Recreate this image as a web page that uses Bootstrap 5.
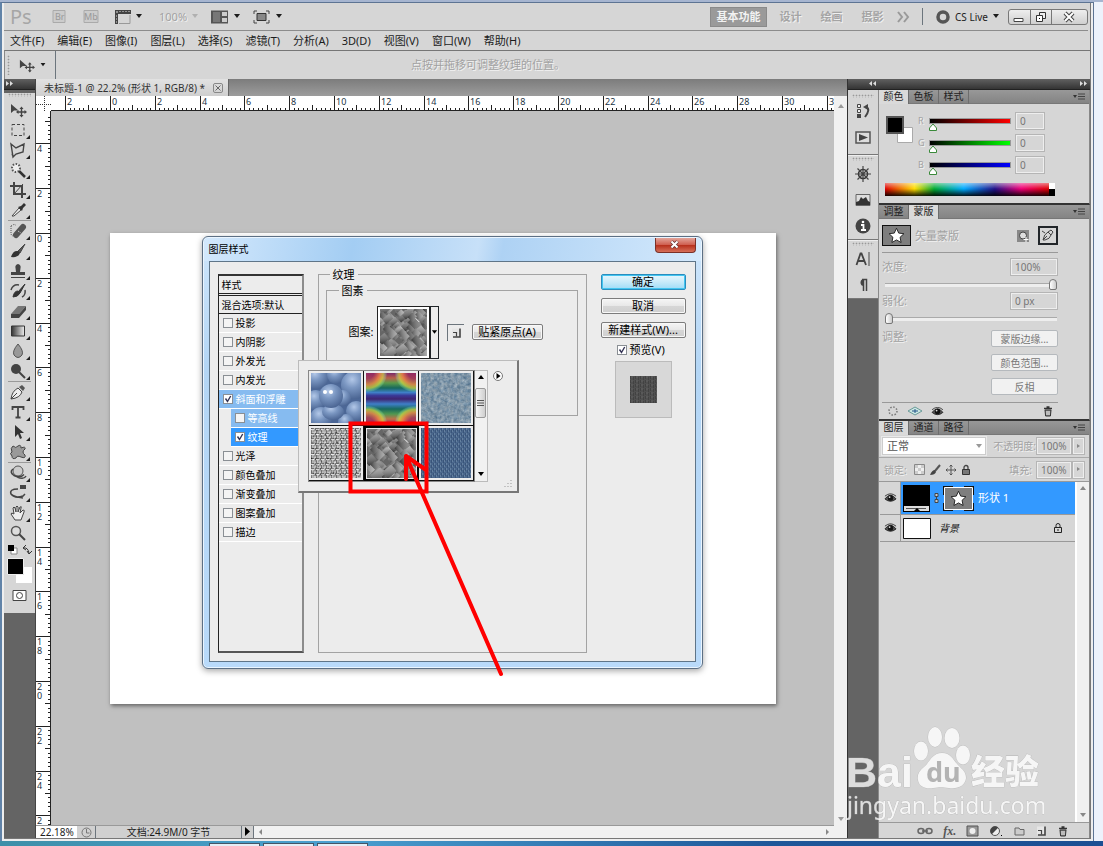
<!DOCTYPE html>
<html lang="zh-CN">
<head>
<meta charset="utf-8">
<meta name="viewport" content="width=device-width, initial-scale=1">
<title>未标题-1</title>
<link href="https://cdn.jsdelivr.net/npm/bootstrap@5.3.0/dist/css/bootstrap.min.css" rel="stylesheet">
<style>
body{background:#edf2fb;font:11px/14px "Noto Sans","Noto Sans CJK SC",sans-serif;color:#1c1c1c;overflow:hidden}
button,input,select{font:inherit;color:inherit}
button{border:0;background:none;padding:0}
svg{display:block;flex:none}
.strip{height:2px;background:#a6b5d0}
.taskbar{height:5px;background:linear-gradient(90deg,#3d8fa8,#4aa0d0 30%,#1e5799 70%,#1b4f93);padding-left:209px;gap:3px}
.taskbar i{width:51px;background:#e4eef6;border:1px solid #456;border-bottom:0;margin-top:2px}
.win{margin-right:9px;border:1px solid #5d7493;border-left:2px solid #6183a8;border-bottom:0;padding:0 2px 2px;background:#eee;min-height:0}
.win-in{background:#d6d6d6;border-bottom:1px solid #777;border-right:1px solid #777;min-height:0}
.appbar{height:28px;border-bottom:1px solid #8c8c8c;margin-right:2px;padding-left:6px}
.ps{font:20px/22px "Noto Sans";color:#a6a6a6;width:42px}
.appic{color:#b0b0b0}
.menus{height:19px;gap:13px;padding-left:6px}
.menus a{color:#1c1c1c;text-decoration:none;white-space:nowrap}
.opts{height:29px;border-top:1px solid #767676;border-left:1px solid #888;position:relative}
.emb{color:#a2a2a2;text-shadow:1px 1px 0 #f2f2f2}
.grip{background:radial-gradient(circle,#999 40%,transparent 50%) 0 0/3px 3px}
.ws{font-size:11px;font-weight:700;color:#a4a4a4;text-shadow:1px 1px 0 #f0f0f0;width:41px}
.ws.on{width:57px;height:20px;background:#9a9a9a;border:1px solid #8a8a8a;color:#f2f2f2;text-shadow:none;margin-right:3px}
.caps{border:1px solid #777;border-radius:3px;height:16px;background:linear-gradient(#eee,#cfcfcf)}
.caps button+button{border-left:1px solid #777}
.caps button{height:14px;width:21px}
.caps button:last-child{width:36px}
.head{height:11px;background:linear-gradient(#606060,#343434);border-bottom:1px solid #222}
.work{min-height:0}
.tools{width:32px;background:#646464;border-right:1px solid #444}
.toolbox{background:#d6d6d6;padding-bottom:8px}
.tool{width:32px;height:20px;padding-left:5px;position:relative;color:#444;display:block}
.tool.fly::after{content:"";position:absolute;right:6px;bottom:1px;border:2px solid #222;border-left-color:transparent;border-top-color:transparent}
.tsep{height:1px;background:#9a9a9a;margin:0 4px}
.tabs{height:17px;background:linear-gradient(#7c7c7c,#9c9c9c)}
.doctab{background:linear-gradient(#e2e2e2,#cfcfcf);padding:0 5px 0 8px;height:17px;border-right:1px solid #666;color:#333;gap:8px;white-space:nowrap;font-size:10px}
.closex{width:10px;height:10px;border:1px solid #888;border-radius:2px}
.rul{background:#fff;overflow:hidden}
.rul text{font:9px "Noto Sans";fill:#234}
.hr-r{height:15px}
.vr-r{width:15px;position:relative}
.vr-r svg,.hr-r svg{position:absolute;left:0;top:0}
.canvas{background:#c0c0c0;min-width:0}
.paper{width:666px;height:471px;background:#fff;box-shadow:1px 2px 4px #666;position:relative}
.status{height:13px;background:#d0d0d0;border-top:1px solid #999;font-size:10px;line-height:12px}
.sbar{width:13px;background:#f1f1f1}
.dock{width:243px;border-left:1px solid #333}
.rail{width:31px;background:#646464;border-right:1px solid #8a8a8a}
.railg{background:#d6d6d6;border-bottom:1px solid #777;color:#444;padding-top:4px}
.railg+.railg{border-top:1px solid #eee;padding-top:1px}
.railg button{display:block;width:30px;height:26px;padding-left:7px}
.ptabs{height:14px;background:linear-gradient(#989898,#848484);border-bottom:1px solid #777;font-size:10px;line-height:13px}
.ptabs button{width:30px;border-right:1px solid #6d6d6d;color:#222;height:14px}
.ptabs button.on{background:#dadada}
.panel{border-bottom:2px solid #333;border-right:1px solid #888;background:#d6d6d6}
.num{background:#d6d6d6;border:1px solid #b5b5b5;outline:1px solid #eee;outline-offset:-2px;color:#777;height:18px;padding:0 4px;font-size:10px;border-radius:0;min-width:0}
.rgb{-webkit-appearance:none;appearance:none;width:82px;height:16px;background:none;margin:0 0 0 -2px}
.rgb::-webkit-slider-runnable-track{height:6px;background:linear-gradient(90deg,#000,var(--c));border:1px solid #999}
.rgb::-webkit-slider-thumb{-webkit-appearance:none;width:8px;height:8px;margin:4px 0 0 -1px;border:0;background:url("data:image/svg+xml,%3Csvg xmlns='http://www.w3.org/2000/svg' viewBox='0 0 8 8'%3E%3Cpath d='M4 1L7.500 5v2.500h-7V5z' fill='%23fff' stroke='%233a8a3a'/%3E%3C/svg%3E")}
.spec{width:164px;height:13px;background:linear-gradient(rgba(255,255,255,.5),transparent 45%,rgba(0,0,0,.9)),linear-gradient(90deg,#d00,#fd0 18%,#0a3 30%,#0af 48%,#218 67%,#e07 83%,#d00)}
.bw{width:6px;background:linear-gradient(#fff 50%,#000 50%)}
.msl{-webkit-appearance:none;appearance:none;height:12px;background:none;margin:0}
.msl::-webkit-slider-runnable-track{height:4px;background:#eee;border-top:1px solid #aaa}
.msl::-webkit-slider-thumb{-webkit-appearance:none;width:8px;height:11px;margin-top:-5px;background:linear-gradient(90deg,#fff,#ccc);border:1px solid #777;border-radius:4px 4px 2px 2px}
.gb{width:67px;height:17px;background:#f1f1f1;border:1px solid #b5b9bd;border-radius:2px;color:#777;font-size:10px;line-height:14px}
.star{width:29px;height:21px;background:#7e7e7e;border:1px solid #111}
.lay{border-bottom:1px solid #999;margin-left:1px}
.eye{width:21px;border-right:1px solid #999}
.lay.on .lc{background:#39f;color:#fff}
.modes{width:104px;height:18px;border:1px solid #ccc;background:#fff;border-radius:0;appearance:none;padding:0 4px;outline:1px solid #e9e9e9;color:#555}
.dlg{left:92px;top:3px;width:501px;border:1px solid #5c6f84;border-radius:6px;background:linear-gradient(#cfe6fb,#b4d6f5 30%,#b9dafa);box-shadow:inset 0 0 0 1px #eaf5ff,0 2px 6px rgba(0,0,0,.35);padding:0 6px 6px;font-size:11px;color:#000;z-index:2}
.ttl{height:23px;font-size:10px;background:linear-gradient(100deg,#d3e8fc,#a3cdf3 30%,#c7e0f8 55%,#aed2f4 60%,#d4e9fc);margin:1px -5px 0;padding-left:5px;border-radius:5px 5px 0 0}
.xbtn{width:41px;height:15px;background:linear-gradient(#e3a59a,#cf5f50 48%,#b7301c 52%,#d6705a);border:1px solid #7b3128;border-top:0;border-radius:0 0 4px 4px;margin-right:5px}
.dbody{background:#ececec;border:1px solid #5f7588;height:401px;padding:12px 9px 8px 8px;gap:14px}
.slist{width:86px;height:379px;border:2px solid #8c8c8c;border-left:1px solid #222;border-top:2px solid #333;border-bottom-color:#555;font-size:10px}
.slist .h1x{height:17px;padding-left:3px;line-height:18px}
.slist .h2x{height:21px;border-top:3px double #222;border-bottom:1px solid #222;padding-left:3px;line-height:18px;white-space:nowrap}
.srow{height:19px;border-bottom:1px solid #fff;gap:3px;padding-left:4px;white-space:nowrap}
.srow.sub{margin-left:12px}
.srow.a{background:#86bbf0;color:#fff}
.srow.b{background:#39f;color:#fff}
.ck{appearance:none;width:10px;height:10px;border:1px solid #8a8f94;background:#f4f4f4;margin:0;flex:none;outline:0}
.ck:checked{background:#fff url("data:image/svg+xml,%3Csvg xmlns='http://www.w3.org/2000/svg' viewBox='0 0 8 8'%3E%3Cpath d='M1.5 3.5l2 3L6.7 1' fill='none' stroke='%23335' stroke-width='1.4'/%3E%3C/svg%3E")}
fieldset.gp{border:1px solid #a3a3a3;min-width:0}
fieldset.gp legend{float:none;width:auto;margin:0 0 0 4px;padding:0 3px;font-size:11px;line-height:14px}
fieldset.inner-gp legend{margin-left:-10px}
.outer-gp{width:269px;height:385px;margin-top:-6px!important;padding:2px 8px 0 7px!important}
.inner-gp{height:132px;padding:8px 0 0 22px!important}
.btnw{border:1px solid #7c7c7c;border-radius:2px;background:linear-gradient(#f5f5f5,#e8e8e8 48%,#d6d6d6 52%,#cfcfcf);height:16px;line-height:14px;white-space:nowrap;box-shadow:inset 0 0 0 1px #f8f8f8}
.btnw.ok{border-color:#2a8dbe;background:linear-gradient(#e6f6fd,#c9ebfa 48%,#9fdcf7);box-shadow:inset 0 0 0 1px #43c5f0}
.thumb{width:53px;height:53px;border:1px solid #222;background:#fff;padding:2px}
.pop{left:95px;top:123px;width:221px;height:133px;background:#ececec;border:1px solid #bbb;border-right:2px solid #777;border-bottom:2px solid #777;padding:9px}
.grid3{display:grid;grid-template-columns:repeat(3,55px);grid-auto-rows:55px;border:1px solid #888;width:167px;height:112px}
.grid3 button{border-right:1px solid #111;border-bottom:1px solid #111;background:#ececec;padding:2px}
.grid3 .sel{border:2px solid #000;padding:1px}
.pbar{width:13px;background:#f1f1f1;border:1px solid #bbb;border-left:0;height:112px}
.pth{width:11px;height:30px;border:1px solid #999;border-radius:2px;background:linear-gradient(90deg,#f6f6f6,#cfcfcf)}
.note{left:0;top:0;pointer-events:none}
.lfoot{height:16px;border-top:1px solid #999;padding:0 20px 0 38px}
.wm{right:46px;bottom:18px;pointer-events:none;z-index:3}
</style>
</head>
<body class="vh-100 d-flex flex-column">
<svg width="0" height="0" class="position-absolute" aria-hidden="true">
<defs>
<linearGradient id="gr" x1="0" x2="1"><stop stop-color="#333"/><stop offset="1" stop-color="#eee"/></linearGradient>
<linearGradient id="mt" x1="0" y1="1" x2="1" y2="0"><stop stop-color="#000" stop-opacity=".5"/><stop offset="1" stop-color="#fff" stop-opacity=".25"/></linearGradient>
<radialGradient id="bb" cx=".4" cy=".3" r=".75"><stop stop-color="#b3c8e8"/><stop offset=".4" stop-color="#7b97c2"/><stop offset="1" stop-color="#46608e"/></radialGradient>
<linearGradient id="rb" x2="0" y2="1"><stop stop-color="#7a2a6a"/><stop offset=".1" stop-color="#b8604a"/><stop offset=".2" stop-color="#5a9a4a"/><stop offset=".3" stop-color="#17695c"/><stop offset=".39" stop-color="#3f7fc8"/><stop offset=".45" stop-color="#3a3a98"/><stop offset=".52" stop-color="#3f2470"/><stop offset=".62" stop-color="#3f7fc8"/><stop offset=".72" stop-color="#17695c"/><stop offset=".82" stop-color="#4f9850"/><stop offset=".92" stop-color="#c0704a"/><stop offset="1" stop-color="#a03050"/></linearGradient>
<radialGradient id="yl"><stop offset=".3" stop-color="#9a2a60" stop-opacity=".7"/><stop offset=".6" stop-color="#f08048" stop-opacity=".8"/><stop offset=".8" stop-color="#d8d840" stop-opacity=".7"/><stop offset="1" stop-color="#8fc" stop-opacity=".1"/></radialGradient>
<filter id="nz" x="0" y="0" width="1" height="1" color-interpolation-filters="sRGB"><feTurbulence type="fractalNoise" baseFrequency=".3" numOctaves="3" seed="4"/><feColorMatrix values=".4 .2 0 0 .2  .3 .2 0 0 .34  .2 .2 0 0 .46  0 0 0 0 1"/></filter>
<filter id="ng" x="0" y="0" width="1" height="1"><feTurbulence type="fractalNoise" baseFrequency=".5" numOctaves="2" seed="9"/><feColorMatrix values="1.6 0 0 0 -.3  1.6 0 0 0 -.3  1.6 0 0 0 -.3  0 0 0 0 .45"/></filter>
<pattern id="wv" width="5" height="5" patternUnits="userSpaceOnUse"><path fill="#aaa" d="M0 0h5v5H0z"/><path d="M0 .5h3M2.500 3h3M.5 2v3M4.500 0v2" stroke="#333"/><path d="M0 1.500h3M3 4h2" stroke="#eee"/></pattern>
<pattern id="dn" width="4" height="5" patternUnits="userSpaceOnUse"><path fill="#4a678c" d="M0 0h4v5H0z"/><path d="M.5 0v3M2.500 2v3" stroke="#3a557a"/><path d="M1.500 0v2M3.500 2v2" stroke="#64809f"/></pattern>
<pattern id="dk" width="5" height="4" patternUnits="userSpaceOnUse"><path fill="#505050" d="M0 0h5v4H0z"/><path d="M.5 0v3M3.500 1v3" stroke="#424242"/><path d="M2 0v2" stroke="#626262"/></pattern>
<symbol id="metal" viewBox="0 0 50 50"><path fill="#666" d="M0 0h50v50H0z"/><g id="metalg"></g></symbol>
<symbol id="st" viewBox="0 0 20 20"><path d="M10 1.500l2.600 5.700 6.100.7-4.500 4.200 1.200 6.100L10 15.200l-5.400 3 1.200-6.100L1.300 7.900l6.100-.7z" fill="#fff" stroke="#111"/></symbol>
<symbol id="mv" viewBox="0 0 18 18"><path d="M2 3v9l3-2.500h4.500z" fill="#444"/><path d="M12.500 7v8M8.500 11h8" stroke="#444" stroke-width="1.400"/><path d="M12.500 5.500l2 2.500h-4zM12.500 16.500l2-2.500h-4zM7 11l2.500-2v4zM18 11l-2.500-2v4z" fill="#444"/></symbol>
<symbol id="eye" viewBox="0 0 14 10"><path d="M1 6Q7-2 13 6Q7 11 1 6z" fill="#555" stroke="#222"/><circle cx="7" cy="5" r="3" fill="#111"/><circle cx="6" cy="4" r="1" fill="#ddd"/><path d="M1 3Q7-2 13 3" fill="none" stroke="#333"/></symbol>
<symbol id="trash" viewBox="0 0 12 12"><path d="M2 3.500h8M4.500 2h3" stroke="#333" stroke-width="1.500"/><path d="M3 5h6l-.6 6H3.600z" fill="#888" stroke="#333"/><path d="M5 6v4M7 6v4" stroke="#eee"/></symbol>
<symbol id="newp" viewBox="0 0 12 12"><path d="M2 1.500h8v8H2z" fill="#e6e6e6"/><path d="M10 1.500V10H3" fill="none" stroke="#444" stroke-width="1.600"/><path d="M3 5.500h3.500V9.500" fill="none" stroke="#444" stroke-width="1.200"/></symbol>
<symbol id="dn3" viewBox="0 0 8 5"><path d="M1 0h6L4 4z" fill="currentColor"/></symbol>
<symbol id="up3" viewBox="0 0 8 5"><path d="M1 4h6L4 0z" fill="currentColor"/></symbol>
<symbol id="pm" viewBox="0 0 12 8"><path d="M0 2h4L2 5z" fill="#333"/><path d="M5 1h7M5 3.500h7M5 6h7" stroke="#444"/></symbol>
<symbol id="lock" viewBox="0 0 10 12"><path d="M3 5V3.500a2 2 0 014 0V5" fill="none" stroke="#444" stroke-width="1.300"/><path d="M1.500 5.500h7v5h-7z" fill="#777" stroke="#333"/></symbol>
</defs></svg>
<div class="strip"></div>
<div class="win flex-grow-1 d-flex flex-column">
<div class="win-in flex-grow-1 d-flex flex-column position-relative">
<header class="appbar d-flex align-items-center">
  <div class="ps">Ps</div>
  <svg class="me-3" width="15" height="13"><path d="M1 .5h12v12H1z" fill="#ccc" stroke="#aaa"/><text x="3" y="10" font-size="9" fill="#999">Br</text></svg>
  <svg class="me-3" width="16" height="13"><path d="M1 .5h14v12H1z" fill="#ccc" stroke="#aaa"/><text x="1" y="10" font-size="9" fill="#999">Mb</text></svg>
  <button class="d-flex align-items-center gap-1" aria-label="查看额外内容"><svg width="16" height="14"><path d="M0 0h16v4H0zM0 4h3v10H0z" fill="#444"/><path d="M2 1v2M5 1v1M8 1v1M11 1v1M14 1v1M1 6h1M1 9h1M1 12h1" stroke="#ddd"/><path d="M4 13.500h11V5" fill="none" stroke="#999"/></svg><svg width="8" height="5"><use href="#dn3"/></svg></button>
  <span class="emb ms-3">100%</span><svg class="appic ms-1" width="8" height="5"><use href="#dn3"/></svg>
  <button class="d-flex align-items-center gap-1 ms-2 ps-1" aria-label="排列文档"><svg width="18" height="14"><path d="M0 .5h17v13H0z" fill="#555"/><path d="M2 2h7v10H2z" fill="#777"/><path d="M11 2h5v4h-5zM11 8h5v4h-5z" fill="#ccc"/></svg><svg width="8" height="5"><use href="#dn3"/></svg></button>
  <button class="d-flex align-items-center gap-1 ms-2 ps-1" aria-label="屏幕模式"><svg width="18" height="14"><path d="M4 3.500h9v7H4z" fill="#888" stroke="#333"/><path d="M1 4V1h3M13 1h3v3M16 10v3h-3M4 13H1v-3" fill="none" stroke="#444"/></svg><svg width="8" height="5"><use href="#dn3"/></svg></button>
  <div class="ms-auto d-flex align-items-center">
    <button class="ws on">基本功能</button><button class="ws">设计</button><button class="ws">绘画</button><button class="ws">摄影</button>
    <button aria-label="更多" style="margin:0 12px 0 3px"><svg width="14" height="12"><path d="M2 1l4 5-4 5M8 1l4 5-4 5" fill="none" stroke="#999" stroke-width="2"/></svg></button>
    <span class="border-start border-secondary" style="height:17px"></span>
    <button class="d-flex align-items-center ms-2 me-2 text-nowrap" style="font-size:10px"><svg class="mx-1" width="16" height="16"><circle cx="8" cy="8" r="5" fill="none" stroke="#555" stroke-width="3.500"/></svg>CS Live<svg class="ms-1" width="8" height="5"><use href="#dn3"/></svg></button>
    <div class="caps d-flex"><button aria-label="最小化"><svg width="20" height="12"><path d="M5 7.500h9v3H5z" fill="#fff" stroke="#444"/></svg></button><button aria-label="还原"><svg width="20" height="12"><path d="M8.500 1.500h6v6h-6z" fill="#eee" stroke="#333"/><path d="M5.500 4.500h6v6h-6z" fill="#fff" stroke="#333"/><path d="M8 7h1v1H8z"/></svg></button><button aria-label="关闭"><svg width="34" height="12"><path d="M13 2l8 8M21 2l-8 8" stroke="#444" stroke-width="4"/><path d="M13 2l8 8M21 2l-8 8" stroke="#fff" stroke-width="2"/></svg></button></div>
  </div>
</header>
<nav class="menus d-flex align-items-center">
<a href="#">文件(F)</a><a href="#">编辑(E)</a><a href="#">图像(I)</a><a href="#">图层(L)</a><a href="#">选择(S)</a><a href="#">滤镜(T)</a><a href="#">分析(A)</a><a href="#">3D(D)</a><a href="#">视图(V)</a><a href="#">窗口(W)</a><a href="#">帮助(H)</a>
</nav>
<div class="opts d-flex align-items-center">
  <span class="grip" style="width:3px;height:20px;margin-left:2px"></span>
  <button class="d-flex align-items-center ms-2 gap-1" aria-label="移动工具"><svg width="17" height="17"><use href="#mv"/></svg><svg width="8" height="4"><use href="#dn3"/></svg></button>
  <span class="border-start border-secondary ms-2 align-self-stretch"></span>
  <span class="emb flex-grow-1 text-center" style="padding-right:170px">点按并拖移可调整纹理的位置。</span>
</div>
<div class="work flex-grow-1 d-flex">
  <aside class="tools flex-shrink-0">
    <div class="head"><svg width="14" height="9"><path d="M2 2v5l3-2.500zM6 2v5l3-2.500z" fill="#ddd"/></svg></div>
    <div class="toolbox" id="toolbox">
      <div class="grip mx-1" style="height:4px;margin-top:3px;margin-bottom:3px"></div>
    </div>
  </aside>
  <main class="flex-grow-1 d-flex flex-column" style="min-width:0">
    <div class="tabs"><div class="doctab d-inline-flex align-items-center">未标题-1 @ 22.2% (形状 1, RGB/8) *<button class="closex" aria-label="关闭"><svg width="8" height="8"><path d="M1.500 1.500l5 5M6.500 1.500l-5 5" stroke="#666"/></svg></button></div></div>
    <div class="flex-grow-1 d-flex" style="min-height:0">
      <div class="flex-grow-1 d-flex flex-column" style="min-width:0">
        <div class="rul hr-r position-relative"><svg id="hr" width="100%" height="15"></svg></div>
        <div class="flex-grow-1 d-flex" style="min-height:0">
          <div class="rul vr-r flex-shrink-0"><svg id="vr" width="15" height="100%"></svg></div>
          <div class="canvas flex-grow-1 d-flex align-items-center justify-content-center">
            <div class="paper flex-shrink-0">
              <section class="dlg position-absolute" aria-label="图层样式">
                <div class="ttl d-flex justify-content-between"><span class="pt-1">图层样式</span><button class="xbtn d-flex justify-content-center align-items-center" aria-label="关闭"><svg width="12" height="9"><path d="M2.500 1.500l6 6M8.500 1.500l-6 6" stroke="#633" stroke-width="3.500"/><path d="M2.500 1.500l6 6M8.500 1.500l-6 6" stroke="#fff" stroke-width="2"/></svg></button></div>
                <div class="dbody d-flex">
                  <div class="slist flex-shrink-0" id="slist"><div class="h1x">样式</div><div class="h2x">混合选项:默认</div></div>
                  <fieldset class="gp outer-gp flex-shrink-0"><legend>纹理</legend>
                    <fieldset class="gp inner-gp"><legend>图素</legend>
                      <div class="d-flex align-items-center">
                        <span style="width:28px">图案:</span>
                        <button class="thumb" aria-label="图案"><svg width="47" height="47"><use href="#metal"/></svg></button>
                        <button class="d-flex align-items-center border border-dark" style="width:9px;height:53px" aria-label="打开图案拾色器"><svg width="7" height="5"><use href="#dn3"/></svg></button>
                        <button class="ms-2 me-2 border-top border-start border-secondary" style="padding:2px" aria-label="新建预设"><svg width="12" height="12"><use href="#newp"/></svg></button>
                        <button class="btnw" style="width:71px">贴紧原点(A)</button>
                      </div>
                    </fieldset>
                  </fieldset>
                  <div class="flex-grow-1 d-flex flex-column" style="gap:8px">
                    <button class="btnw ok">确定</button><button class="btnw">取消</button><button class="btnw">新建样式(W)...</button>
                    <div style="margin:-3px 0 0 16px"><label class="d-flex align-items-center" style="gap:3px"><input type="checkbox" class="ck" checked>预览(V)</label>
                      <div class="d-flex align-items-center justify-content-center" style="width:57px;height:57px;margin:4px 0 0 -2px;background:#d8d8d8;border:1px solid #bbb"><svg width="27" height="27"><path d="M0 0h27v27H0z" fill="url(#dk)"/></svg></div></div>
                  </div>
                </div>
                <div class="pop position-absolute d-flex">
                  <div class="grid3">
                    <button aria-label="气泡"><svg width="50" height="50"><path d="M0 0h50v50H0z" fill="#4c6796"/><g fill="url(#bb)"><circle cx="6" cy="5" r="11"/><circle cx="25" cy="2" r="9"/><circle cx="44" cy="12" r="14"/><circle cx="5" cy="27" r="10"/><circle cx="10" cy="45" r="11"/><circle cx="45" cy="38" r="10"/><circle cx="35" cy="49" r="8"/><ellipse cx="22" cy="39" rx="11" ry="8"/><circle cx="32" cy="25" r="8"/><circle cx="20" cy="23" r="12"/></g><circle cx="14" cy="19" r="2" fill="#fff"/><circle cx="20" cy="19" r="2" fill="#fff"/></svg></button>
                    <button aria-label="彩虹"><svg width="50" height="50"><path d="M0 0h50v50H0z" fill="url(#rb)"/><g fill="url(#yl)"><ellipse cx="2" cy="0" rx="19" ry="19"/><ellipse cx="48" cy="0" rx="19" ry="19"/><ellipse cx="2" cy="50" rx="19" ry="17"/><ellipse cx="48" cy="50" rx="19" ry="17"/></g></svg></button>
                    <button aria-label="蓝色纸纹"><svg width="50" height="50"><path d="M0 0h50v50H0z" filter="url(#nz)"/></svg></button>
                    <button aria-label="编织"><svg width="50" height="50"><path d="M0 0h50v50H0z" fill="url(#wv)"/><path d="M0 0h50v50H0z" filter="url(#ng)"/></svg></button>
                    <button class="sel" aria-label="金属"><svg width="49" height="49"><use href="#metal"/></svg></button>
                    <button aria-label="牛仔布"><svg width="50" height="50"><path d="M0 0h50v50H0z" fill="url(#dn)"/></svg></button>
                  </div>
                  <div class="pbar d-flex flex-column align-items-center"><svg class="my-1" width="8" height="5"><use href="#up3"/></svg><div class="pth mt-1 d-flex align-items-center justify-content-center"><svg width="7" height="8"><path d="M0 1.500h7M0 4h7M0 6.500h7" stroke="#555"/></svg></div><svg class="mt-auto mb-1" width="8" height="5"><use href="#dn3"/></svg></div>
                  <div class="d-flex flex-column justify-content-between align-items-end flex-grow-1"><button class="me-1" aria-label="菜单"><svg width="12" height="12"><circle cx="6" cy="6" r="4.500" fill="#fff" stroke="#777"/><path d="M4.500 3v6l4-3z"/></svg></button><svg style="margin:0 -5px -6px 0" width="9" height="9"><path d="M7 1v1M7 4v1M7 7v1M4 4v1M4 7v1M1 7v1" stroke="#999"/></svg></div>
                </div>
                <svg class="note position-absolute" width="320" height="445"><path d="M147.500 186.500h76v68h-76z" fill="none" stroke="red" stroke-width="4"/><path d="M203 219L298 437M203 242V219L223 233" fill="none" stroke="red" stroke-width="4" stroke-linecap="round" stroke-linejoin="round"/></svg>
              </section>
            </div>
          </div>
        </div>
        <div class="status d-flex flex-shrink-0">
          <span class="bg-white px-1 text-end" style="width:41px">22.18%</span>
          <span class="border-end border-secondary d-flex align-items-center justify-content-center" style="width:19px"><svg width="11" height="11"><circle cx="5.500" cy="5.500" r="4.500" fill="none" stroke="#777"/><path d="M5.500 2v4h3" fill="none" stroke="#777"/></svg></span>
          <span class="border-end border-secondary text-center" style="width:146px">文档:24.9M/0 字节</span>
          <button class="border-end border-secondary" style="width:12px" aria-label="状态菜单"><svg width="11" height="12"><path d="M3 1v9l5-4.500z"/></svg></button>
          <div class="flex-grow-1 d-flex justify-content-between px-1" style="background:#f1f1f1"><svg width="6" height="12"><path d="M4 3v6L1 6z" fill="#888"/></svg><svg width="6" height="12"><path d="M2 3v6l3-3z" fill="#888"/></svg></div>
        </div>
      </div>
      <div class="sbar d-flex flex-column justify-content-between align-items-center pt-2 pb-3" style="color:#999"><svg width="8" height="5"><use href="#up3"/></svg><svg width="8" height="5"><use href="#dn3"/></svg></div>
    </div>
  </main>
  <aside class="dock flex-shrink-0 d-flex flex-column">
    <div class="head d-flex justify-content-between"><svg width="30" height="9"><path d="M24 2v5l-3-2.500zM28 2v5l-3-2.500z" fill="#ddd"/></svg><svg width="12" height="9"><path d="M2 2v5l3-2.500zM6 2v5l3-2.500z" fill="#ddd"/></svg></div>
    <div class="flex-grow-1 d-flex" style="min-height:0">
      <div class="rail flex-shrink-0">
        <div class="railg pb-1"><div class="grip mx-1" style="height:4px"></div>
          <button aria-label="历史记录"><svg width="16" height="16"><path d="M2.500 1.500h3v3h-3zM2.500 6.500h3v3h-3z" fill="#eee" stroke="#444"/><path d="M2 11h4v4H2z" fill="#444"/><path d="M10 14q6-8 1-10" fill="none" stroke="#444" stroke-width="2"/><path d="M8 4l5-3v6z" fill="#444"/></svg></button>
          <button aria-label="动作"><svg width="16" height="16"><path d="M1 3h14v11H1z" fill="#ddd" stroke="#555" stroke-width="1.500"/><path d="M4 5v7l9-3.500z" fill="#444"/></svg></button></div>
        <div class="railg"><div class="grip mx-1" style="height:4px"></div>
          <button aria-label="导航器"><svg width="16" height="16"><circle cx="8" cy="8" r="4.500" fill="none" stroke="#333" stroke-width="1.500"/><path d="M8 0v16M0 8h16M2.500 2.500l11 11M13.500 2.500l-11 11" stroke="#444" stroke-width="1.200"/></svg></button>
          <button aria-label="直方图"><svg width="16" height="16"><path d="M1 2.500h14v11H1z" fill="#ddd" stroke="#666"/><path d="M1 13v-3l3-1 2-4 2 2 3-2 2 4 2 1v3z" fill="#333"/></svg></button>
          <button aria-label="信息"><svg width="16" height="16"><circle cx="8" cy="8" r="7.500" fill="#444"/><circle cx="8" cy="4" r="1.300" fill="#fff"/><path d="M6 7h2.500v5M6 12h5" stroke="#fff" stroke-width="1.800" fill="none"/></svg></button></div>
        <div class="railg"><div class="grip mx-1" style="height:4px"></div>
          <button aria-label="字符"><svg width="16" height="16"><path d="M1.500 14L5.500 2.500h1L11 14M3 10h6" fill="none" stroke="#444" stroke-width="1.800"/><path d="M14 1v14" stroke="#444"/></svg></button>
          <button aria-label="段落"><svg width="16" height="16"><path d="M11.500 14V2.500H7M8.500 14V2" stroke="#444" stroke-width="1.500" fill="none"/><path d="M9 2a3.500 3.500 0 000 7z" fill="#444"/></svg></button></div>
      </div>
      <div class="flex-grow-1 d-flex flex-column" style="min-width:0">
        <section class="panel"><div class="ptabs d-flex align-items-center"><button class="on">颜色</button><button>色板</button><button>样式</button><svg class="ms-auto me-1" width="12" height="8"><use href="#pm"/></svg></div>
          <div class="d-flex px-1" style="padding-top:8px">
            <svg class="mt-1" style="margin-left:3px" width="28" height="28"><path d="M11.500 11.500h15v15h-15z" fill="#fff" stroke="#aaa"/><path d="M1 1h16v16H1z" stroke="#555" stroke-width="2"/></svg>
            <div class="d-flex flex-column ms-1" style="gap:4px">
              <label class="d-flex align-items-center"><span class="emb" style="width:13px;font-size:9px">R</span><input type="range" class="rgb" style="--c:#f00" value="0"><input class="num ms-1" style="width:30px" value="0" aria-label="R 值"></label>
              <label class="d-flex align-items-center"><span class="emb" style="width:13px;font-size:9px">G</span><input type="range" class="rgb" style="--c:#0f0" value="0"><input class="num ms-1" style="width:30px" value="0" aria-label="G 值"></label>
              <label class="d-flex align-items-center"><span class="emb" style="width:13px;font-size:9px">B</span><input type="range" class="rgb" style="--c:#00f" value="0"><input class="num ms-1" style="width:30px" value="0" aria-label="B 值"></label>
            </div></div>
          <div class="d-flex" style="margin:9px 0 7px 6px"><div class="spec"></div><div class="bw"></div></div>
        </section>
        <section class="panel"><div class="ptabs d-flex align-items-center"><button>调整</button><button class="on">蒙版</button><svg class="ms-auto me-1" width="12" height="8"><use href="#pm"/></svg></div>
          <div style="margin:0 31px 0 3px">
            <div class="d-flex align-items-center" style="height:34px;border-bottom:1px solid #999"><div class="star d-flex justify-content-center align-items-center"><svg width="17" height="17"><use href="#st"/></svg></div><span class="emb ms-1 me-auto">矢量蒙版</span><svg class="me-1" width="14" height="14"><path d="M1 1h12v12H1z" fill="#888"/><circle cx="7" cy="6.500" r="3.500" fill="#ddd" stroke="#444"/><path d="M10 8v5M7.500 10.500h5" stroke="#fff"/></svg><button class="ms-1 border border-2 border-dark" aria-label="矢量蒙版"><svg width="16" height="15"><path d="M3 12q1-6 5-8l3 3q-1 4-6 5zM8 4l3-2 2 2-2 3M3 12l4-4M2 3l3 2" fill="none" stroke="#444"/></svg></button></div>
            <label class="d-flex align-items-center justify-content-between" style="margin-top:5px"><span class="emb">浓度:</span><input class="num" style="width:48px" value="100%"></label>
            <input type="range" class="msl d-block" style="width:172px;margin:3px 0 1px 3px" value="100" aria-label="浓度">
            <label class="d-flex align-items-center justify-content-between"><span class="emb">弱化:</span><input class="num" style="width:48px" value="0 px"></label>
            <input type="range" class="msl d-block" style="width:172px;margin:3px 0 5px 3px" value="0" aria-label="羽化">
            <div class="d-flex justify-content-between" style="margin-bottom:7px"><span class="emb">调整:</span><div class="d-flex flex-column" style="gap:7px"><button class="gb">蒙版边缘...</button><button class="gb">颜色范围...</button><button class="gb">反相</button></div></div>
            <div class="d-flex align-items-center gap-2 px-1" style="height:17px;border-top:1px solid #999"><svg width="13" height="12"><circle cx="7" cy="6" r="4" fill="none" stroke="#777" stroke-width="1.500" stroke-dasharray="1.500 1.600"/></svg><svg width="16" height="10"><path d="M1 5l7-4 7 4-7 4z" fill="#cde8e4" stroke="#6a9a98"/><path d="M5 5h6M8 3v4" stroke="#258"/></svg><svg width="13" height="9"><use href="#eye"/></svg><svg class="ms-auto" width="12" height="12"><use href="#trash"/></svg></div>
          </div>
        </section>
        <section class="panel flex-grow-1 d-flex flex-column border-bottom-0"><div class="ptabs d-flex align-items-center"><button class="on">图层</button><button>通道</button><button>路径</button><svg class="ms-auto me-1" width="12" height="8"><use href="#pm"/></svg></div>
          <div class="d-flex align-items-center" style="height:23px;padding:0 4px 0 3px;border-bottom:1px solid #aaa"><div class="position-relative"><select class="modes" aria-label="混合模式"><option>正常</option></select><svg class="position-absolute" style="right:3px;top:7px;color:#999" width="8" height="5"><use href="#dn3"/></svg></div><label class="d-flex align-items-center ms-auto text-nowrap" style="font-size:10px"><span class="emb">不透明度:</span><input class="num" style="width:36px" value="100%"></label><button class="num px-1" style="width:13px" aria-label="不透明度滑块"><svg width="4" height="7"><path d="M0 1v4l3-2z" fill="#888"/></svg></button></div>
          <div class="d-flex align-items-center" style="height:24px;padding:0 4px 0 5px;border-bottom:1px solid #999;font-size:10px"><span class="emb" style="width:30px">锁定:</span><svg width="11" height="11"><path d="M.5.500h10v10H.5z" fill="#eee" stroke="#888"/><path d="M1 1h3v3H1zM7 1h3v3H7zM4 4h3v3H4zM1 7h3v3H1zM7 7h3v3H7z" fill="#ccc"/></svg><svg class="ms-1" width="12" height="12"><path d="M11 1L6 7" stroke="#555" stroke-width="2"/><path d="M6 6q-3 0-5 5 5 0 6-3z" fill="#444"/></svg><svg class="ms-1" width="12" height="12"><path d="M6 1v10M1 6h10M4.500 2.500L6 1l1.500 1.500M4.500 9.500L6 11l1.500-1.500M2.500 4.500L1 6l1.500 1.500M9.500 4.500L11 6l-1.500 1.500" stroke="#555" fill="none"/></svg><svg class="ms-1" width="10" height="12"><use href="#lock"/></svg><label class="d-flex align-items-center ms-auto"><span class="emb">填充:</span><input class="num ms-1" style="width:36px" value="100%"></label><button class="num px-1" style="width:13px" aria-label="填充滑块"><svg width="4" height="7"><path d="M0 1v4l3-2z" fill="#888"/></svg></button></div>
          <div class="flex-grow-1 d-flex"><div class="flex-grow-1">
            <div class="lay on d-flex" style="height:33px"><div class="eye d-flex align-items-center justify-content-center"><svg width="13" height="10"><use href="#eye"/></svg></div><div class="lc flex-grow-1 d-flex align-items-center"><svg style="margin-left:2px" width="27" height="27"><path d="M0 0h27v27H0z"/><path d="M1 21h25v5H1z" fill="#ddd"/><path d="M3 23.500h20" stroke="#555"/><path d="M11 26l3-3 3 3z"/></svg><svg class="mx-1" width="5" height="12"><path d="M1 1.500h3v3H1zM1 7.500h3v3H1zM2.500 4v4" fill="#ccc" stroke="#444"/></svg><svg width="31" height="25"><path d="M0 0h31v25H0z" fill="#111"/><path d="M10 .5h11M10 24.500h11M.5 9v8M30.500 9v8" stroke="#39f"/><path d="M1.500 1.500h28v22h-28z" fill="#7e7e7e" stroke="#fff"/><use href="#st" x="7" y="4" width="17" height="17"/></svg><span class="ms-1">形状 1</span></div></div>
            <div class="lay d-flex" style="height:27px"><div class="eye d-flex align-items-center justify-content-center"><svg width="13" height="10"><use href="#eye"/></svg></div><div class="lc flex-grow-1 d-flex align-items-center pe-2"><svg style="margin-left:2px" width="28" height="21"><path d="M.5.500h27v20H.5z" fill="#fff" stroke="#111"/></svg><span class="ms-2 me-auto fst-italic" style="font-size:10px">背景</span><svg class="me-1" width="10" height="12"><path d="M3 5V3.500a2 2 0 014 0V5M1.500 5.500h7v5h-7zM5 7v2" fill="none" stroke="#222"/></svg></div></div>
          </div><div class="d-flex flex-column justify-content-between align-items-center py-1" style="width:14px;background:#f0f0f0;border-left:2px solid #fff;color:#888"><svg width="8" height="5"><use href="#up3"/></svg><svg width="8" height="5"><use href="#dn3"/></svg></div></div>
          <div class="lfoot d-flex align-items-center justify-content-between"><svg width="16" height="8"><path d="M1 4q0-2.500 3-2.500t3 2.500-3 2.500T1 4zM9 4q0-2.500 3-2.500t3 2.500-3 2.500T9 4zM5 4h6" fill="none" stroke="#666" stroke-width="1.500"/></svg><span class="fst-italic fw-bold" style="font-family:'Liberation Serif',serif;color:#555;font-size:12px">fx.</span><svg width="13" height="12"><path d="M1 1h11v10H1z" fill="#999" stroke="#555"/><circle cx="6.500" cy="6" r="3" fill="#eee"/></svg><svg width="14" height="12"><circle cx="6" cy="6" r="4.500" fill="#eee" stroke="#555"/><path d="M2.800 9.200A4.500 4.500 0 019.200 2.800z" fill="#444"/><path d="M12 10h1v1h-1z"/></svg><svg width="11" height="10"><path d="M1 2h4l1 1.500h4V9H1z" fill="#ccc" stroke="#666"/></svg><svg width="12" height="12"><use href="#newp"/></svg><svg width="12" height="12"><use href="#trash"/></svg></div>
        </section>
      </div>
    </div>
  </aside>
</div>
<svg class="wm position-absolute" width="200" height="96" opacity=".78"><g fill="#fff" stroke="#aaa" stroke-width=".6" paint-order="stroke"><text x="2" y="63" font-family="Liberation Sans" font-weight="700" font-size="43">Bai</text><text x="127" y="60" font-family="Noto Sans CJK SC" font-weight="900" font-size="34">经验</text><text x="3" y="90" font-family="Noto Sans" font-size="23">jingyan.baidu.com</text><ellipse cx="77" cy="27" rx="7" ry="9.500"/><ellipse cx="91" cy="13" rx="7" ry="10"/><ellipse cx="108" cy="14" rx="7.500" ry="10"/><ellipse cx="119" cy="31" rx="7" ry="9.500"/><path d="M98 29c-10 0-12 9-18 14-5 4-7 8-6 13 1 7 8 9 15 8 6-1 10-1 16 0 9 1 16-2 17-10 0-6-4-9-8-13-5-5-7-12-16-12z"/></g><text x="82" y="58" font-family="Noto Sans" font-size="27" font-weight="700" fill="#aaa">du</text></svg>
</div></div>
<div class="taskbar d-flex"><i></i><i></i><i></i></div>
<script src="https://cdn.jsdelivr.net/npm/bootstrap@5.3.0/dist/js/bootstrap.bundle.min.js"></script>
<script>
// Ruler ticks: ten small divisions between labelled marks
const step = 44.8;
let h = '<path d="M0 8.5H15M8.500 0V15" stroke="#333" stroke-dasharray="1 1"/><path d="M15 14.500H2000" stroke="#222"/>', v = '<path d="M14.500 0V2000" stroke="#222"/>';
for (let n = -1; n < 17; n++) {
  const x = 74 + n * step;
  for (let k = 0; k < 10; k++) {
    const p = Math.round(x + k * step / 10) + .5, l = k === 0 ? 0 : k === 5 ? 9 : 12;
    if (p > 15) h += `<path d="M${p} ${l}V15" stroke="#222"/>`;
  }
  h += `<text x="${Math.round(x) + 2}" y="9">${Math.abs(n * 2)}</text>`;
}
for (let n = -2; n < 14; n++) {
  const y = 122 + n * step;
  for (let k = n === -2 ? -6 : 0; k < 10; k++) {
    const p = Math.round(y + k * step / 10) + .5, l = k === 0 ? 0 : Math.abs(k) === 5 ? 9 : 12;
    v += `<path d="M${l} ${p}H15" stroke="#222"/>`;
  }
  [...String(Math.abs(n * 2))].forEach((c, i) => { if (n < 13 || !i) v += `<text x="1" y="${Math.round(y) + 9 + i * 9}">${c}</text>`; });
}
hr.innerHTML = h; vr.innerHTML = v;

// Overlapping metal plates with a fixed pseudo-random layout
let s = 7, g = ''; const rnd = () => (s = s * 16807 % 2147483647) / 2147483647;
for (let i = 0; i < 110; i++) {
  const x = rnd() * 56 - 3, y = rnd() * 56 - 3, w = 5 + rnd() * 4, c = 95 + rnd() * 75 | 0, a = rnd() > .5 ? 45 : -40, l = w + rnd() * 5;
  g += `<g transform="translate(${x} ${y}) rotate(${a})"><path d="M${-l / 2} ${-w / 2}h${l}v${w}h${-l}z" fill="rgb(${c},${c},${c})"/><path d="M${-l / 2} ${-w / 2}h${l}v${w}h${-l}z" fill="url(#mt)"/></g>`;
}
metalg.innerHTML = g + '<path d="M38 10l4 4" stroke="#fff"/>';

// Layer style list: label, checked, row class
const rows = [['投影'], ['内阴影'], ['外发光'], ['内发光'], ['斜面和浮雕', 1, 'a'], ['等高线', 0, 'sub a'], ['纹理', 1, 'sub b'], ['光泽'], ['颜色叠加'], ['渐变叠加'], ['图案叠加'], ['描边']];
slist.insertAdjacentHTML('beforeend', rows.map(r => `<label class="srow d-flex align-items-center ${r[2] || ''}"><input type="checkbox" class="ck" ${r[1] ? 'checked' : ''}>${r[0]}</label>`).join(''));

// Toolbox: name, icon, has fly-out
const T = [
['移动', '<use href="#mv" width="18" height="18"/>', 0],
['选框', '<path d="M3 3.500h12v11H3z" fill="none" stroke="#444" stroke-dasharray="3 2"/>', 1],
['套索', '<path d="M2 3l5 4 8-4-1 8-7 2-3 3zM4 12q-2 2 1 3" fill="none" stroke="#444" stroke-width="1.400"/>', 1],
['魔棒', '<circle cx="7" cy="7" r="4" fill="#eee" stroke="#555" stroke-dasharray="1.500 1.500" stroke-width="2"/><path d="M10 10l6 6" stroke="#333" stroke-width="2.500"/>', 1],
['裁剪', '<path d="M5 1v12h12M1 5h12v12" fill="none" stroke="#444" stroke-width="2"/><path d="M5 13l9-10" stroke="#444"/>', 1],
['吸管', '<path d="M3 15l7-8 2 2-7 6z" fill="#eee" stroke="#444"/><path d="M9 6l3-1 3-3 2 2-3 3-1 3z" fill="#333"/>', 1], 0,
['修复', '<path d="M2 4q4-3 5 0M2 4v8q2 4 5 0" fill="none" stroke="#555" stroke-dasharray="1 1"/><path d="M7 13l7-8" stroke="#555" stroke-width="6" stroke-linecap="round"/><path d="M9 9l3 2" stroke="#ddd" stroke-dasharray="1 1"/>', 1],
['画笔', '<path d="M16 2l-7 7 2 2z" fill="#555" stroke="#444"/><path d="M9 9q-5-1-7 6 7 1 9-4z" fill="#333"/>', 1],
['图章', '<path d="M9 2a3 3 0 012.500 4L11 10h5v3H2v-3h5L6.500 6A3 3 0 019 2z" fill="#444"/><path d="M2 15.500h14" stroke="#444"/>', 1],
['历史画笔', '<path d="M16 2l-7 8 2 1zM9 9q-4 0-5 6 5 0 7-4z" fill="#333" stroke="#333"/><path d="M2 8q2-6 8-5M16 8q1 5-3 7" fill="none" stroke="#444" stroke-width="1.500"/>', 1],
['橡皮擦', '<path d="M2 12l7-8h8l-7 8z" fill="#777"/><path d="M2 12h8v4H2zM10 12l7-8v4l-7 8z" fill="#444"/>', 1],
['渐变', '<path d="M2.500 4h13v10h-13z" fill="url(#gr)" stroke="#333"/>', 1],
['模糊', '<path d="M9 2q6 7 4 11-4 5-8 0Q3 9 9 2z" fill="#999" stroke="#555"/>', 1],
['减淡', '<circle cx="7" cy="7" r="5" fill="#444"/><path d="M10 10l6 6" stroke="#444" stroke-width="2"/>', 1], 0,
['钢笔', '<path d="M2 16q1-8 7-11l4 4q-2 6-11 7z" fill="#eee" stroke="#444"/><path d="M2 16l6-6" stroke="#444"/><path d="M10 4l3-2 3 3-2 3z" fill="#555"/>', 1],
['文字', '<path d="M3.500 7V4h11v3M9 4v10.500M6.500 14.500h5" fill="none" stroke="#444" stroke-width="1.800"/>', 1],
['路径选择', '<path d="M6 2v12l3-3 2 5 2-1-2-5h4z" fill="#333"/>', 1],
['形状', '<path d="M4 3q3 3 5 0 3-2 3 2 5-2 4 1-4 3 0 6 1 4-4 2-4-2-5 1-4 2-4-2-3-3 0-4-2-4 1-6z" fill="#999" stroke="#444"/>', 1], 0,
['3D 旋转', '<circle cx="9" cy="7" r="5" fill="#ccc" stroke="#555"/><path d="M4 5Q0 8 5 11.500q6 3 10-1M8 13q7 3 9-1" fill="none" stroke="#444" stroke-width="1.500"/>', 1],
['3D 环绕', '<path d="M9 5Q0 5 2 10q4 5 12 2l2-2M2 10q3 3 12 4" fill="none" stroke="#444" stroke-width="1.500"/><path d="M11 1h6v4h-6z" fill="#444"/>', 1],
['抓手', '<path d="M6 16L2 10q0-2 3 0L4 4q1-2 2 0l1 4V3q1-2 2 0v5l2-5q2-1 1 1l-1 5 3-3q2 0 1 2l-3 8z" fill="#eee" stroke="#444"/>', 1],
['缩放', '<circle cx="7" cy="7" r="4.500" fill="#ddd" stroke="#555" stroke-width="1.500"/><path d="M10 10l6 6" stroke="#444" stroke-width="2"/>', 0]];
toolbox.insertAdjacentHTML('beforeend', T.map(t => t ? `<button class="tool ${t[2] ? 'fly' : ''}" aria-label="${t[0]}"><svg width="18" height="18" viewBox="0 0 18 18">${t[1]}</svg></button>` : '<div class="tsep"></div>').join('') +
`<svg width="32" height="62"><path d="M7 5h6v6H7z" fill="#fff" stroke="#888"/><path d="M4 2h6v6H4z"/><path d="M19 5q5-1 6 5M19 5l3-3M19 5l3 2M25 11l-2-3M25 11l3-3" fill="none" stroke="#333"/><path d="M12 24h16v16H12z" fill="#fff"/><path d="M3.500 15.500h16v16h-16z" stroke="#eee"/><path d="M9 47.500h13v10H9z" fill="#fff" stroke="#444"/><circle cx="15.500" cy="52.500" r="3" fill="#fff" stroke="#444"/></svg>`);
</script>
</body>
</html>
